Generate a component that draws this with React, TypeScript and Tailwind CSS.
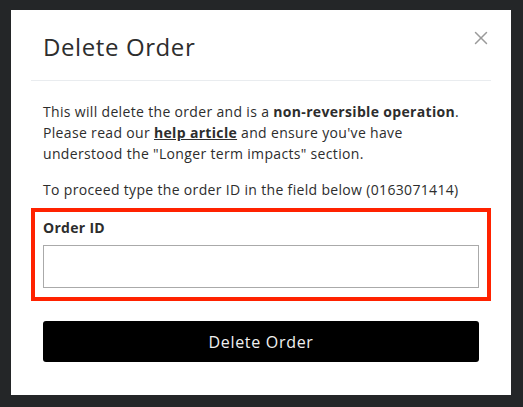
import { X } from "lucide-react";

const font = { fontFamily: '"Open Sans", "Liberation Sans", sans-serif' };

export default function App() {
  return (
    <div
      className="h-[407px] w-[523px] bg-[#242628] pl-[11px] pt-[10px]"
      style={font}
    >
      <div className="relative h-[385px] w-[500px] bg-white text-[#2d2d2d]">
        <div className="mx-5 border-b border-[#e9ecef] px-3 pb-[17px] pt-[21px]">
          <h2 className="text-[24px] leading-[32px] font-normal tracking-[0.6px]">
            Delete Order
          </h2>
        </div>
        <button
          type="button"
          className="absolute right-[19px] top-[17px] text-[#9a9a9a]"
          aria-label="Close"
        >
          <X className="size-[22px]" strokeWidth={1.6} />
        </button>

        <div className="px-5 pt-5">
          <div className="px-3 text-[14px] leading-[21px] tracking-[0.33px]">
            <p>
              This will delete the order and is a{" "}
              <strong className="font-bold">non-reversible operation</strong>.
              <br />
              Please read our{" "}
              <a href="#" className="font-bold underline">
                help article
              </a>{" "}
              and ensure you've have
              <br />
              understood the "Longer term impacts" section.
            </p>
            <p className="mt-[15px]">
              To proceed type the order ID in the field below (0163071414)
            </p>
          </div>

          <div className="mt-2 border-4 border-[#ff2200] px-2 pb-[9px] pt-[5px]">
            <label className="block text-[14px] leading-[21px] font-bold tracking-[0.3px]">
              Order ID
            </label>
            <input
              type="text"
              className="mt-[7px] block h-[43px] w-full border border-[#aaaaaa] px-2 outline-none"
            />
          </div>

          <div className="px-3 pt-5">
            <button
              type="button"
              className="h-[41px] w-full rounded-[3px] bg-black text-[16px] font-normal tracking-[0.7px] text-[#f0f0f0]"
            >
              Delete Order
            </button>
          </div>
        </div>
      </div>
    </div>
  );
}
